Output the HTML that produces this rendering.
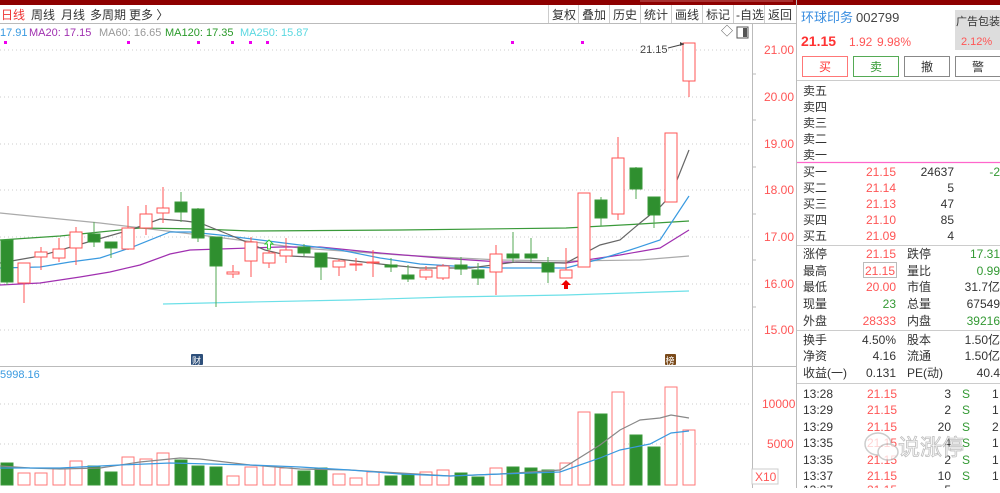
<!DOCTYPE html>
<html><head><meta charset="utf-8"><style>
*{margin:0;padding:0}
body{width:1000px;height:488px;overflow:hidden;background:#fff;font-family:"Liberation Sans","Noto Sans CJK SC",sans-serif}
svg text{font-family:"Liberation Sans","Noto Sans CJK SC",sans-serif}
</style></head><body>
<svg width="1000" height="488" viewBox="0 0 1000 488" xmlns="http://www.w3.org/2000/svg">
<rect x="0" y="0" width="1000" height="5" fill="#8e0000"/>
<rect x="640" y="0" width="153" height="2" fill="#a83030"/>
<!-- toolbar -->
<g font-size="12" fill="#333">
<text x="1" y="19" fill="#e33">日线</text><text x="31" y="19">周线</text><text x="61" y="19">月线</text><text x="90" y="19">多周期</text><text x="129" y="19">更多 〉</text>
</g>
<line x1="0" y1="23.5" x2="796" y2="23.5" stroke="#bbb"/>
<g stroke="#ccc"><line x1="548.5" y1="5" x2="548.5" y2="23"/><line x1="578.5" y1="5" x2="578.5" y2="23"/><line x1="609.5" y1="5" x2="609.5" y2="23"/><line x1="640.5" y1="5" x2="640.5" y2="23"/><line x1="671.5" y1="5" x2="671.5" y2="23"/><line x1="702.5" y1="5" x2="702.5" y2="23"/><line x1="733.5" y1="5" x2="733.5" y2="23"/><line x1="764.5" y1="5" x2="764.5" y2="23"/></g>
<g font-size="12" fill="#333"><text x="552" y="19">复权</text><text x="582" y="19">叠加</text><text x="613" y="19">历史</text><text x="644" y="19">统计</text><text x="675" y="19">画线</text><text x="706" y="19">标记</text><text x="736" y="19">-自选</text><text x="768" y="19">返回</text></g>
<!-- MA text -->
<g font-size="11"><text x="0" y="36" fill="#3a9ae0">17.91</text><text x="29" y="36" fill="#a030b0">MA20: 17.15</text><text x="99" y="36" fill="#999">MA60: 16.65</text><text x="165" y="36" fill="#2a9a2a">MA120: 17.35</text><text x="240" y="36" fill="#5ad8e0">MA250: 15.87</text></g>
<g fill="#e0e"><rect x="4" y="41" width="3" height="3"/><rect x="127" y="41" width="3" height="3"/><rect x="197" y="41" width="3" height="3"/><rect x="231" y="41" width="3" height="3"/><rect x="249" y="41" width="3" height="3"/><rect x="266" y="41" width="3" height="3"/><rect x="511" y="41" width="3" height="3"/><rect x="581" y="41" width="3" height="3"/></g>
<text x="721" y="35" font-size="12" fill="#555">◇</text><rect x="737" y="27" width="11" height="11" fill="none" stroke="#555"/><rect x="743" y="28" width="4" height="9" fill="#555"/>
<!-- grid -->
<g stroke="#ccc" stroke-dasharray="1,3"><line x1="0" y1="50" x2="752" y2="50"/><line x1="0" y1="97" x2="752" y2="97"/><line x1="0" y1="144" x2="752" y2="144"/><line x1="0" y1="190" x2="752" y2="190"/><line x1="0" y1="237" x2="752" y2="237"/><line x1="0" y1="284" x2="752" y2="284"/><line x1="0" y1="330" x2="752" y2="330"/><line x1="0" y1="404" x2="752" y2="404"/><line x1="0" y1="444" x2="752" y2="444"/></g>
<line x1="752.5" y1="24" x2="752.5" y2="488" stroke="#bbb"/>
<line x1="796.5" y1="0" x2="796.5" y2="488" stroke="#bbb"/>
<line x1="0" y1="366.5" x2="796" y2="366.5" stroke="#bbb"/>
<g font-size="12" fill="#f55"><text x="764" y="54">21.00</text><text x="764" y="101">20.00</text><text x="764" y="148">19.00</text><text x="764" y="194">18.00</text><text x="764" y="241">17.00</text><text x="764" y="288">16.00</text><text x="764" y="334">15.00</text><text x="762" y="408">10000</text><text x="767" y="448">5000</text></g>
<g stroke="#bbb"><line x1="752" y1="74" x2="756" y2="74"/><line x1="752" y1="120" x2="756" y2="120"/><line x1="752" y1="167" x2="756" y2="167"/><line x1="752" y1="214" x2="756" y2="214"/><line x1="752" y1="260" x2="756" y2="260"/><line x1="752" y1="307" x2="756" y2="307"/></g>
<!-- MA lines -->
<g fill="none" stroke-width="1.2">
<polyline stroke="#aaa" points="0,213 100,223 200,235 300,248 400,255 460,258 500,260 566,261 640,260 689,256"/>
<polyline stroke="#3a9a3a" points="0,240 60,236 100,232 140,228 200,229 250,231 400,230 566,228 640,224 689,221"/>
<polyline stroke="#a030b0" points="0,285 40,283 80,277 110,272 140,265 170,254 190,250 220,249 280,247 320,247 380,253 440,258 500,262 566,263 620,255 660,248 689,230"/>
<polyline stroke="#3a9ae0" points="0,268 40,267 70,262 100,258 130,248 170,232 190,232 220,235 260,240 300,245 340,250 380,258 420,264 470,267 500,268 566,268 600,259 630,250 660,240 689,196"/>
<polyline stroke="#666" points="0,263 40,256 95,240 130,230 160,219 185,221 200,223 230,235 265,250 290,256 330,258 380,264 420,268 470,268 516,262 566,263 600,245 620,240 640,223 660,207 671,195 689,150"/>
<polyline stroke="#6de0e8" points="163,304 250,302 350,300 450,297 566,295 689,291"/>
</g>
<!-- candles -->
<g stroke-width="1">
<g stroke="#5a5" ><line x1="7" y1="240" x2="7" y2="285"/><line x1="94" y1="222" x2="94" y2="247"/><line x1="111" y1="242" x2="111" y2="258"/><line x1="181" y1="192" x2="181" y2="222"/><line x1="198" y1="208" x2="198" y2="242"/><line x1="216" y1="237" x2="216" y2="307"/><line x1="304" y1="244" x2="304" y2="256"/><line x1="321" y1="253" x2="321" y2="280"/><line x1="391" y1="258" x2="391" y2="272"/><line x1="408" y1="265" x2="408" y2="282"/><line x1="461" y1="257" x2="461" y2="275"/><line x1="478" y1="263" x2="478" y2="285"/><line x1="513" y1="232" x2="513" y2="262"/><line x1="531" y1="238" x2="531" y2="262"/><line x1="548" y1="257" x2="548" y2="283"/><line x1="601" y1="197" x2="601" y2="226"/><line x1="636" y1="167" x2="636" y2="199"/><line x1="654" y1="197" x2="654" y2="228"/></g>
<g fill="#2f8f2f" stroke="#3a9a3a"><rect x="1" y="240" width="12" height="42"/><rect x="88" y="234" width="12" height="8"/><rect x="105" y="242" width="12" height="6"/><rect x="175" y="202" width="12" height="10"/><rect x="192" y="209" width="12" height="29"/><rect x="210" y="237" width="12" height="29"/><rect x="298" y="247" width="12" height="6"/><rect x="315" y="253" width="12" height="14"/><rect x="385" y="265" width="12" height="2"/><rect x="402" y="275" width="12" height="4"/><rect x="455" y="265" width="12" height="4"/><rect x="472" y="270" width="12" height="8"/><rect x="507" y="254" width="12" height="4"/><rect x="525" y="254" width="12" height="4"/><rect x="542" y="263" width="12" height="9"/><rect x="595" y="200" width="12" height="18"/><rect x="630" y="168" width="12" height="21"/><rect x="648" y="197" width="12" height="18"/></g>
<g stroke="#f55"><line x1="24" y1="263" x2="24" y2="303"/><line x1="41" y1="247" x2="41" y2="270"/><line x1="59" y1="238" x2="59" y2="262"/><line x1="76" y1="227" x2="76" y2="265"/><line x1="128" y1="206" x2="128" y2="250"/><line x1="146" y1="205" x2="146" y2="235"/><line x1="163" y1="187" x2="163" y2="223"/><line x1="233" y1="265" x2="233" y2="278"/><line x1="251" y1="237" x2="251" y2="277"/><line x1="269" y1="250" x2="269" y2="268"/><line x1="286" y1="238" x2="286" y2="263"/><line x1="339" y1="259" x2="339" y2="276"/><line x1="356" y1="258" x2="356" y2="271"/><line x1="373" y1="250" x2="373" y2="277"/><line x1="426" y1="266" x2="426" y2="280"/><line x1="443" y1="264" x2="443" y2="280"/><line x1="496" y1="245" x2="496" y2="295"/><line x1="566" y1="248" x2="566" y2="278"/><line x1="618" y1="137" x2="618" y2="220"/><line x1="689" y1="43" x2="689" y2="97"/></g>
<g fill="#fff" stroke="#f55"><rect x="18" y="263" width="12" height="20"/><rect x="35" y="252" width="12" height="5"/><rect x="53" y="249" width="12" height="9"/><rect x="70" y="232" width="12" height="16"/><rect x="122" y="228" width="12" height="21"/><rect x="140" y="214" width="12" height="14"/><rect x="157" y="208" width="12" height="5"/><rect x="227" y="272" width="12" height="2"/><rect x="245" y="242" width="12" height="19"/><rect x="263" y="253" width="12" height="10"/><rect x="280" y="250" width="12" height="6"/><rect x="333" y="261" width="12" height="6"/><rect x="350" y="264" width="12" height="1"/><rect x="367" y="262" width="12" height="1"/><rect x="420" y="270" width="12" height="7"/><rect x="437" y="266" width="12" height="12"/><rect x="490" y="254" width="12" height="18"/><rect x="560" y="270" width="12" height="8"/><rect x="578" y="193" width="12" height="74"/><rect x="612" y="158" width="12" height="56"/><rect x="665" y="133" width="12" height="69"/><rect x="683" y="43" width="12" height="38"/></g>
</g>
<path d="M269 240 l-4 4 h2.5 v5 h3 v-5 h2.5z" fill="#fff" stroke="#3c3"/>
<path d="M566 280 l-5 5 h3 v4 h4 v-4 h3z" fill="#e00"/>
<text x="640" y="53" font-size="11" fill="#444">21.15</text>
<path d="M668 48 L684 44" stroke="#444" fill="none"/><path d="M680 42 l4 2 l-4 2z" fill="#444"/>
<!-- icons -->
<rect x="191" y="354" width="12" height="11" rx="1" fill="#2d4f7a"/><text x="192" y="364" font-size="9" fill="#fff">财</text>
<rect x="665" y="354" width="11" height="11" rx="1" fill="#7a4a1a"/><text x="665.5" y="364" font-size="9" fill="#fff">榜</text>
<text x="0" y="378" font-size="11" fill="#3a9ae0">5998.16</text>
<!-- volume -->
<g fill="#2f8f2f" stroke="#3a9a3a">
<rect x="1" y="463" width="12" height="22"/><rect x="88" y="466" width="12" height="19"/><rect x="105" y="472" width="12" height="13"/><rect x="175" y="460" width="12" height="25"/><rect x="192" y="466" width="12" height="19"/><rect x="210" y="467" width="12" height="18"/><rect x="298" y="471" width="12" height="14"/><rect x="315" y="468" width="12" height="17"/><rect x="385" y="476" width="12" height="9"/><rect x="402" y="475" width="12" height="10"/><rect x="455" y="473" width="12" height="12"/><rect x="472" y="477" width="12" height="8"/><rect x="507" y="467" width="12" height="18"/><rect x="525" y="468" width="12" height="17"/><rect x="542" y="470" width="12" height="15"/><rect x="595" y="414" width="12" height="71"/><rect x="630" y="435" width="12" height="50"/><rect x="648" y="447" width="12" height="38"/></g>
<g fill="#fff" stroke="#f77">
<rect x="18" y="473" width="12" height="12"/><rect x="35" y="473" width="12" height="12"/><rect x="53" y="469" width="12" height="16"/><rect x="70" y="461" width="12" height="24"/><rect x="122" y="457" width="12" height="28"/><rect x="140" y="459" width="12" height="26"/><rect x="157" y="453" width="12" height="32"/><rect x="227" y="476" width="12" height="9"/><rect x="245" y="467" width="12" height="18"/><rect x="263" y="466" width="12" height="19"/><rect x="280" y="468" width="12" height="17"/><rect x="333" y="474" width="12" height="11"/><rect x="350" y="478" width="12" height="7"/><rect x="367" y="472" width="12" height="13"/><rect x="420" y="472" width="12" height="13"/><rect x="437" y="470" width="12" height="15"/><rect x="490" y="468" width="12" height="17"/><rect x="560" y="463" width="12" height="22"/><rect x="578" y="412" width="12" height="73"/><rect x="612" y="392" width="12" height="93"/><rect x="665" y="387" width="12" height="98"/><rect x="683" y="430" width="12" height="55"/></g>
<polyline fill="none" stroke="#888" stroke-width="1.2" points="0,466 30,468 60,469 100,468 140,462 180,458 200,459 250,465 300,469 350,470 400,473 450,476 500,474 560,470 600,445 620,430 640,420 660,418 671,415 689,418"/>
<polyline fill="none" stroke="#3a9ae0" stroke-width="1.2" points="0,468 60,468 120,465 170,463 250,465 300,467 350,470 400,474 450,476 500,474 560,472 600,458 620,450 650,444 671,433 689,431"/>
<rect x="752" y="469" width="26" height="15" fill="#fff" stroke="#ccc"/><text x="755" y="481" font-size="12" fill="#f55">X10</text>
<!-- right panel -->
<text x="801" y="22" font-size="13" fill="#3a8ee0">环球印务</text><text x="856" y="22" font-size="13" fill="#444">002799</text>
<rect x="955" y="10" width="45" height="40" fill="#ddd"/><text x="956" y="25" font-size="11" fill="#333">广告包装</text><text x="961" y="45" font-size="11" fill="#f55">2.12%</text>
<text x="801" y="46" font-size="14" font-weight="bold" fill="#f33">21.15</text><text x="849" y="46" font-size="12" fill="#f55">1.92</text><text x="877" y="46" font-size="12" fill="#f55">9.98%</text>
<rect x="802.5" y="56.5" width="45" height="20" fill="#fff" stroke="#f77"/><text x="819" y="71" font-size="12" fill="#f33">买</text>
<rect x="853.5" y="56.5" width="45" height="20" fill="#fff" stroke="#5a5"/><text x="870" y="71" font-size="12" fill="#393">卖</text>
<rect x="904.5" y="56.5" width="45" height="20" fill="#fff" stroke="#888"/><text x="921" y="71" font-size="12" fill="#333">撤</text>
<rect x="955.5" y="56.5" width="45" height="20" fill="#fff" stroke="#888"/><text x="972" y="71" font-size="12" fill="#333">警</text>
<line x1="797" y1="80.5" x2="1000" y2="80.5" stroke="#ccc"/>
<g font-size="12" fill="#333"><text x="803" y="95">卖五</text><text x="803" y="111">卖四</text><text x="803" y="127">卖三</text><text x="803" y="143">卖二</text><text x="803" y="159">卖一</text>
<text x="803" y="176">买一</text><text x="803" y="192">买二</text><text x="803" y="208">买三</text><text x="803" y="224">买四</text><text x="803" y="240">买五</text></g>
<line x1="797" y1="162.5" x2="1000" y2="162.5" stroke="#f6c" stroke-width="1.2"/>
<g font-size="12" fill="#f55" text-anchor="end"><text x="896" y="176">21.15</text><text x="896" y="192">21.14</text><text x="896" y="208">21.13</text><text x="896" y="224">21.10</text><text x="896" y="240">21.09</text></g>
<g font-size="12" fill="#333" text-anchor="end"><text x="954" y="176">24637</text><text x="954" y="192">5</text><text x="954" y="208">47</text><text x="954" y="224">85</text><text x="954" y="240">4</text></g>
<text x="1000" y="176" font-size="12" fill="#393" text-anchor="end">-2</text>
<line x1="797" y1="245.5" x2="1000" y2="245.5" stroke="#ccc"/>
<g font-size="12" fill="#333"><text x="803" y="258">涨停</text><text x="803" y="275">最高</text><text x="803" y="291">最低</text><text x="803" y="308">现量</text><text x="803" y="325">外盘</text>
<text x="907" y="258">跌停</text><text x="907" y="275">量比</text><text x="907" y="291">市值</text><text x="907" y="308">总量</text><text x="907" y="325">内盘</text></g>
<rect x="863.5" y="262.5" width="33" height="15" fill="none" stroke="#bbb"/>
<g font-size="12" text-anchor="end"><text x="896" y="258" fill="#f55">21.15</text><text x="895" y="275" fill="#f55">21.15</text><text x="896" y="291" fill="#f55">20.00</text><text x="896" y="308" fill="#393">23</text><text x="896" y="325" fill="#f55">28333</text>
<text x="1000" y="258" fill="#393">17.31</text><text x="1000" y="275" fill="#393">0.99</text><text x="1000" y="291" fill="#333">31.7亿</text><text x="1000" y="308" fill="#333">67549</text><text x="1000" y="325" fill="#393">39216</text></g>
<line x1="797" y1="330.5" x2="1000" y2="330.5" stroke="#ccc"/>
<g font-size="12" fill="#333"><text x="803" y="344">换手</text><text x="803" y="360">净资</text><text x="803" y="377">收益(一)</text><text x="907" y="344">股本</text><text x="907" y="360">流通</text><text x="907" y="377">PE(动)</text></g>
<g font-size="12" fill="#333" text-anchor="end"><text x="896" y="344">4.50%</text><text x="896" y="360">4.16</text><text x="896" y="377">0.131</text><text x="1000" y="344">1.50亿</text><text x="1000" y="360">1.50亿</text><text x="1000" y="377">40.4</text></g>
<line x1="797" y1="383.5" x2="1000" y2="383.5" stroke="#ccc"/>
<g font-size="12" fill="#333"><text x="803" y="398">13:28</text><text x="803" y="414">13:29</text><text x="803" y="431">13:29</text><text x="803" y="447">13:35</text><text x="803" y="464">13:35</text><text x="803" y="480">13:37</text><text x="803" y="494">13:37</text></g>
<g font-size="12" fill="#f55" text-anchor="end"><text x="897" y="398">21.15</text><text x="897" y="414">21.15</text><text x="897" y="431">21.15</text><text x="897" y="447">21.15</text><text x="897" y="464">21.15</text><text x="897" y="480">21.15</text><text x="897" y="494">21.15</text></g>
<g font-size="12" fill="#333" text-anchor="end"><text x="951" y="398">3</text><text x="951" y="414">2</text><text x="951" y="431">20</text><text x="951" y="447">4</text><text x="951" y="464">2</text><text x="951" y="480">10</text><text x="951" y="494">5</text></g>
<g font-size="12" fill="#393"><text x="962" y="398">S</text><text x="962" y="414">S</text><text x="962" y="431">S</text><text x="962" y="447">S</text><text x="962" y="464">S</text><text x="962" y="480">S</text></g>
<g font-size="12" fill="#333"><text x="992" y="398">1</text><text x="992" y="414">1</text><text x="992" y="431">2</text><text x="992" y="447">1</text><text x="992" y="464">1</text><text x="992" y="480">1</text></g>
<!-- watermark -->
<g opacity="0.75"><ellipse cx="878" cy="444" rx="13" ry="11" fill="#fff" stroke="#bbb" stroke-width="1.5"/><ellipse cx="888" cy="452" rx="10" ry="8" fill="#fff" stroke="#bbb" stroke-width="1.5"/>
<text x="898" y="455" font-size="22" fill="#fff" stroke="#aaa" stroke-width="0.8">说涨停</text></g>
</svg>
</body></html>
